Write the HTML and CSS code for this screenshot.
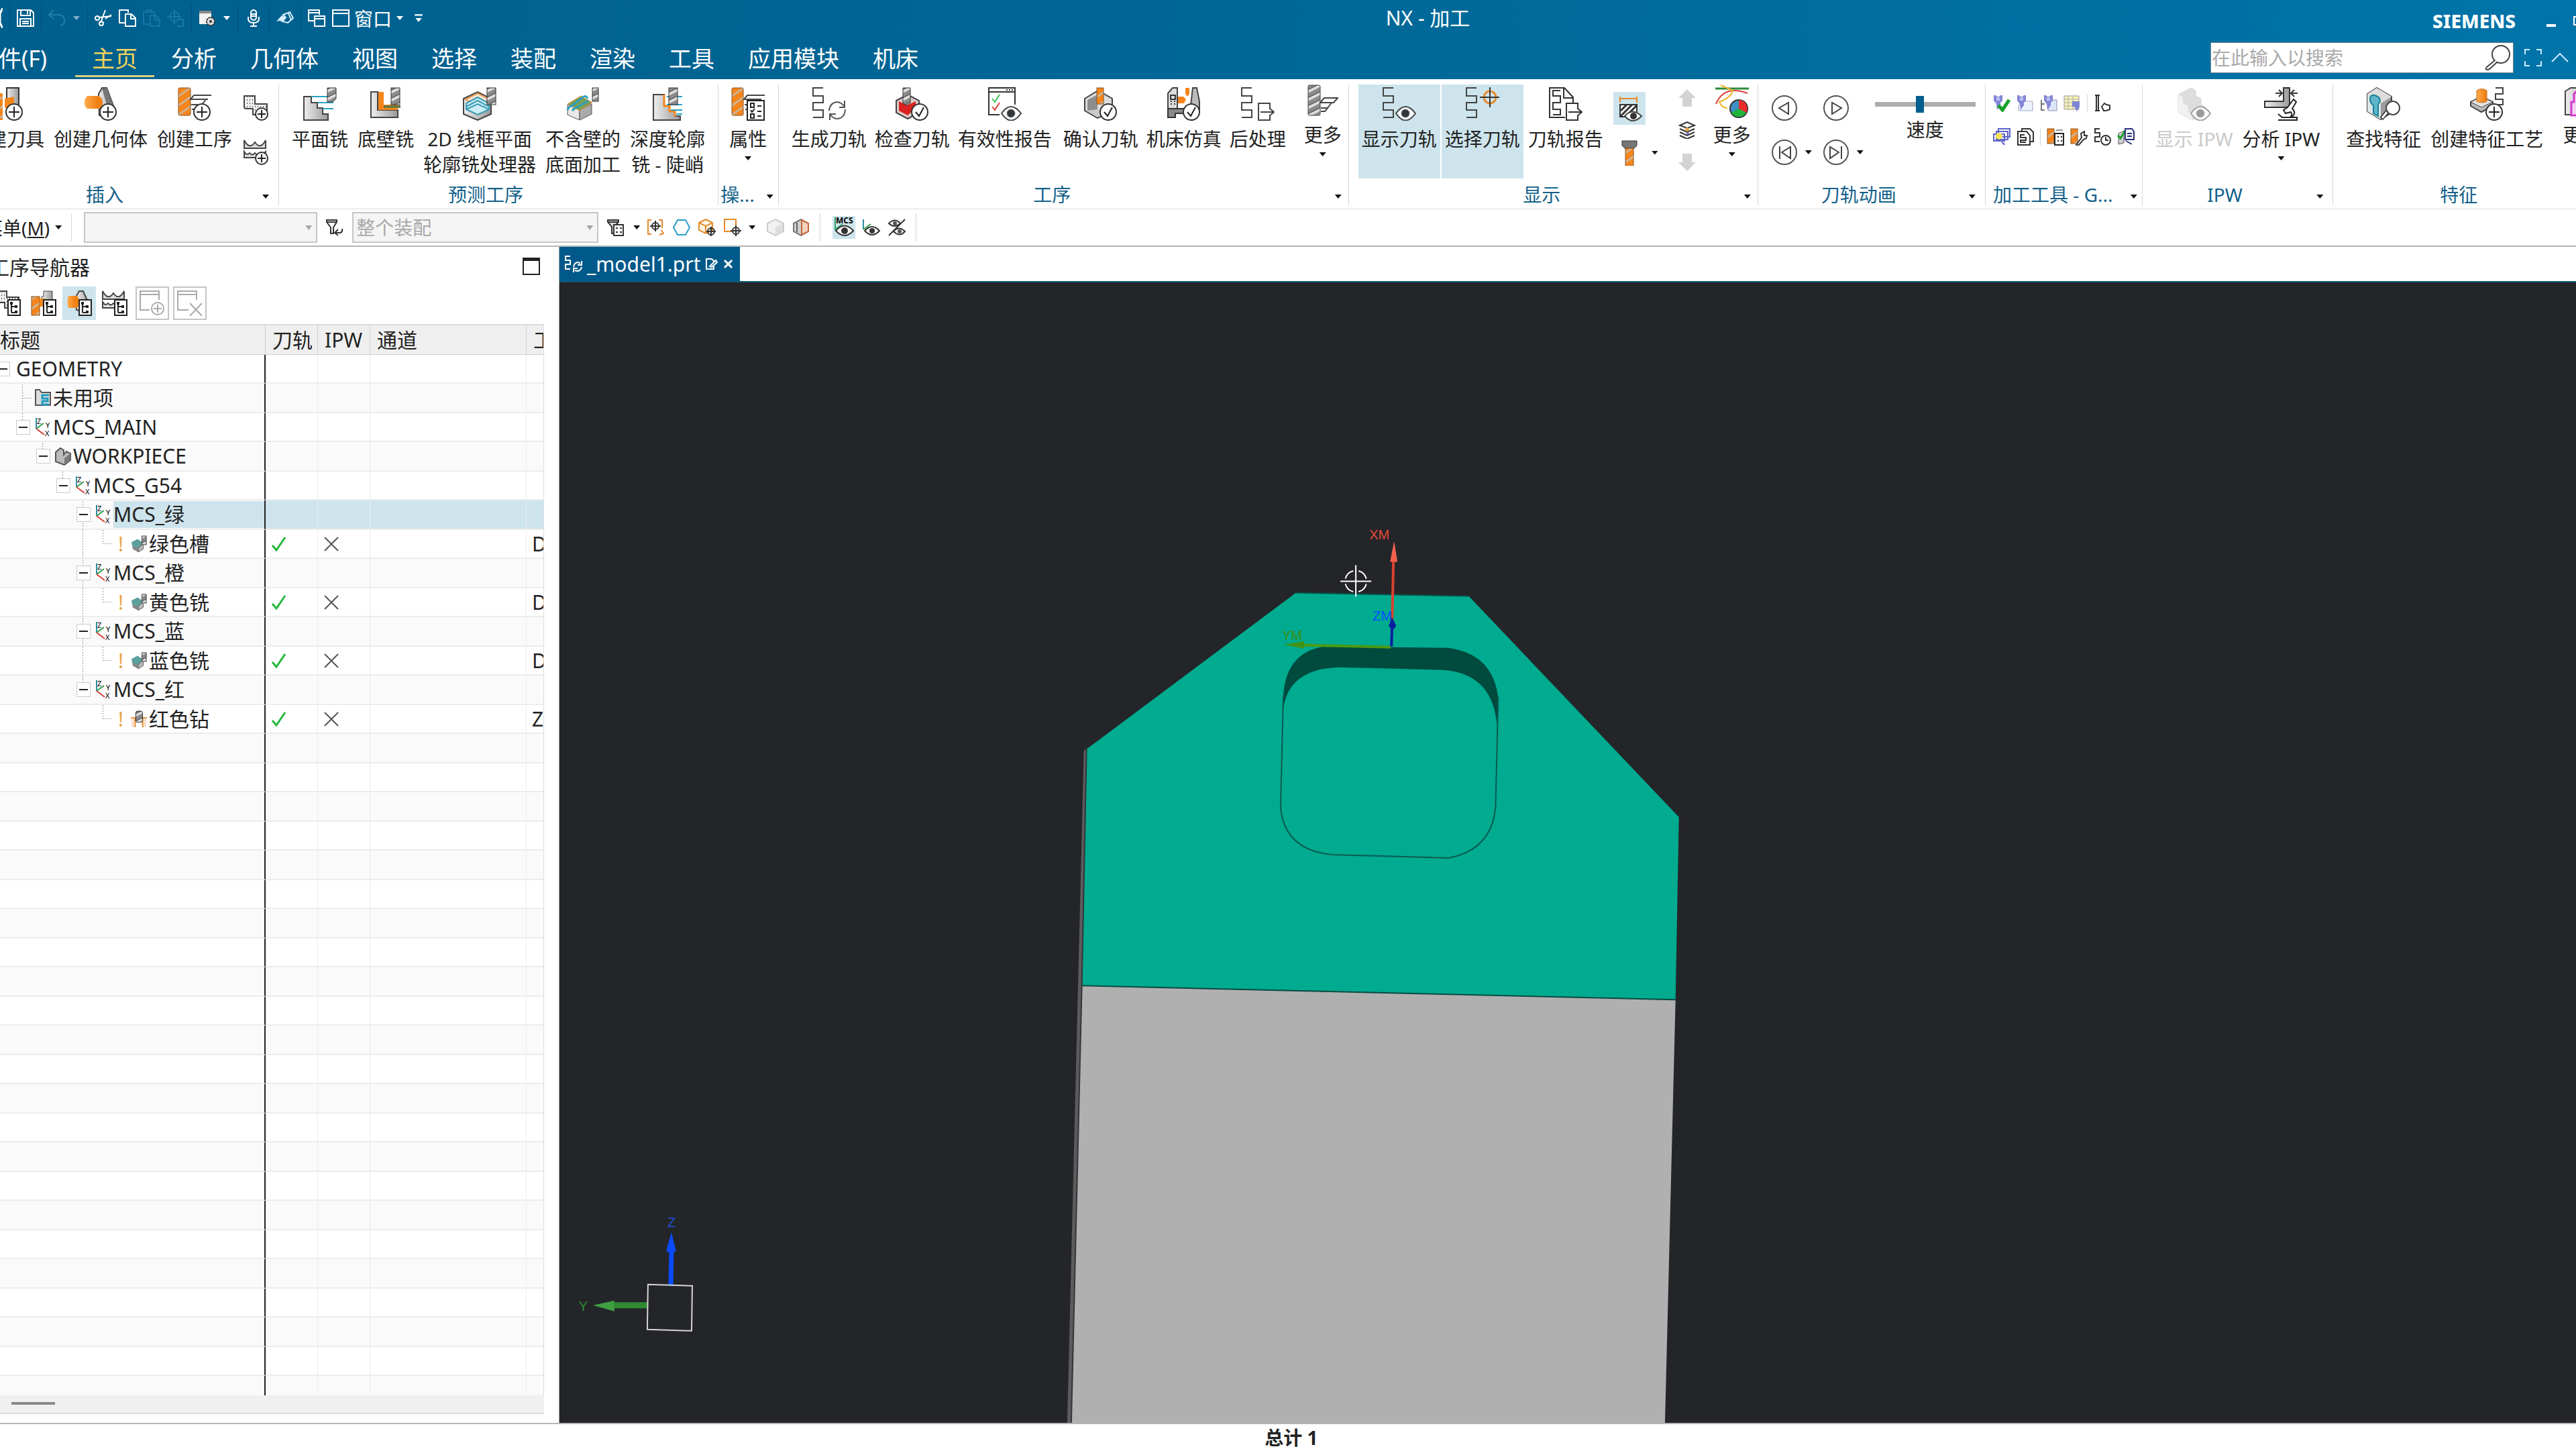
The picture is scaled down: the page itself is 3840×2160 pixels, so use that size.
FILE: index.html
```html
<!DOCTYPE html>
<html lang="zh-CN">
<head>
    <meta charset="UTF-8">
    <meta name="viewport" content="width=device-width, initial-scale=1.0">
    <title>NX - 加工</title>
    <link rel="stylesheet" href="styles.css">
</head>
<body>
    <!-- Shared icon parts -->
    <svg class="sprite" width="0" height="0" aria-hidden="true">
        <defs>
            <pattern id="grey-flute" width="24" height="12" patternUnits="userSpaceOnUse">
                <rect width="24" height="12" fill="#8c8c8c"/>
                <path d="M0 12L24 0M-12 6L12 -6M12 18L36 6" stroke="#dcdcdc" stroke-width="4"/>
                <path d="M0 9L24 -3M0 21L24 9" stroke="#444" stroke-width="1"/>
            </pattern>
            <pattern id="orange-flute" width="20" height="14" patternUnits="userSpaceOnUse">
                <rect width="20" height="14" fill="#f5861c"/>
                <path d="M0 14L20 0M-10 7L10 -7M10 21L30 7" stroke="#cdb495" stroke-width="3"/>
            </pattern>
            <pattern id="dots" width="4" height="5" patternUnits="userSpaceOnUse">
                <rect width="4" height="5" fill="#eee"/>
                <rect x="1" y="1" width="1" height="2" fill="#555"/>
            </pattern>
            <linearGradient id="steel">
                <stop offset="0" stop-color="#eee"/>
                <stop offset="1" stop-color="#9a9a9a"/>
            </linearGradient>
            <linearGradient id="orange">
                <stop offset="0" stop-color="#ffab4d"/>
                <stop offset="1" stop-color="#ee7a0c"/>
            </linearGradient>
        </defs>
        <symbol id="plus" viewBox="0 0 50 50"><circle cx="36" cy="37" r="12" fill="#fff" stroke="#333" stroke-width="2"/><path d="M36 29v16M28 37h16" stroke="#222" stroke-width="2"/></symbol>
        <symbol id="check" viewBox="0 0 50 50"><circle cx="36" cy="37" r="12" fill="#fff" stroke="#333" stroke-width="2"/><path d="M30 37l5 6 7-13" fill="none" stroke="#222" stroke-width="2"/></symbol>
        <symbol id="eye" viewBox="0 0 50 50"><path d="M20 39Q34 19 49 39Q34 60 20 39Z" fill="#fff" fill-opacity=".8" stroke="#444" stroke-width="2"/><circle cx="34" cy="39" r="6" fill="#33373a" stroke="#777"/></symbol>
        <symbol id="path" viewBox="0 0 50 50"><path d="M16 1H1V13H16V23H1V34H16V45H1" fill="none" stroke="#444" stroke-width="2"/></symbol>
        <symbol id="list" viewBox="0 0 50 50"><rect x="24" y="20" width="25" height="29" fill="#fff" stroke="#222" stroke-width="2"/><path d="M29 24h5v6h-5zM29 40h5v6h-5zM29 34l2 3 4-5M39 28h6M39 36h6M39 43h6" fill="none" stroke="#222" stroke-width="2"/></symbol>
        <symbol id="layers" viewBox="0 0 50 50"><path d="M24 12h26M24 12l-5 6h26M20 26h18l-5 7H21M42 18l-6 8" fill="none" stroke="#444" stroke-width="2"/></symbol>
        <symbol id="mcs" viewBox="0 0 24 28"><path d="M2 0V16" stroke="#2b8fa8" stroke-width="2"/><path d="M2 16L13 8" stroke="#2f9e44" stroke-width="2"/><path d="M2 16L14 25" stroke="#d9413b" stroke-width="2"/><text x="3" y="9" font-size="11">Z</text><text x="16" y="15" font-size="11">Y</text><text x="15" y="27" font-size="11">X</text></symbol>
        <symbol id="mill-op" viewBox="0 0 26 28"><path d="M1 11L11 6L20 12L12 24L3 20Z" fill="#5c9f9b"/><path d="M3 17L12 21V27L3 22Z" fill="#888"/><path d="M12 21L20 12V22L12 27Z" fill="#b9b9b9" stroke="#555"/><rect x="18" y="1" width="7" height="14" fill="url(#grey-flute)" stroke="#333"/></symbol>
        <symbol id="tree-badge" viewBox="0 0 38 38"><rect x="19" y="14" width="18" height="23" fill="#fff" stroke="#222" stroke-width="2"/><path d="M24 18v15M24 24h7M24 33h7" fill="none" stroke="#222" stroke-width="2"/><path d="M22 17h4v4h-4zM29 22h4v4h-4zM29 30h4v4h-4z" fill="#222"/></symbol>
        <symbol id="g-mark" viewBox="0 0 26 26"><path d="M1 1h3l2 2h3l2-2h3v8l-3 3v4l-5 7-1-9-4-5z" fill="#8585d6"/><path d="M5 4h5v5H5z" fill="#b9c4f3"/></symbol>
        <symbol id="done" viewBox="0 0 24 24"><path d="M2 14l6 7L21 2" fill="none" stroke="#25b83c" stroke-width="3"/></symbol>
        <symbol id="none" viewBox="0 0 24 24"><path d="M2 2l20 20M22 2L2 22" fill="none" stroke="#555" stroke-width="2"/></symbol>
    </svg>

    <header class="app-header">
        <div class="title-bar">
            <div class="quick-access">
                <svg class="logo-cut" viewBox="0 0 4 30"><path d="M4 0L0 8V22L4 30" fill="none" stroke="#fff" stroke-width="3"/></svg>
                <i class="divider"></i>
                <button class="quick" aria-label="保存"><svg viewBox="0 0 26 26"><path d="M1 1h20l4 4v20H1zM6 1v8h14V1M16 2v5M5 25V14h16v11M8 18h10M8 21h10" fill="none" stroke="#fff" stroke-width="2"/></svg></button>
                <i class="divider"></i>
                <button class="quick dim" aria-label="撤消"><svg viewBox="0 0 26 26"><path d="M8 1L1 8l7 6M1 8h14q9 0 9 9 0 6-6 7" fill="none" stroke="#4b9cc4" stroke-width="2"/></svg></button>
                <button class="quick narrow dim" aria-label="撤消列表"><i class="caret light"></i></button>
                <i class="divider"></i>
                <button class="quick" aria-label="剪切"><svg viewBox="0 0 26 26"><path d="M16 1L10 17M25 10L6 12M25 8l-9 6M9 20L12 12" fill="none" stroke="#fff" stroke-width="2"/><circle cx="4" cy="13" r="3" fill="none" stroke="#fff" stroke-width="2"/><circle cx="10" cy="21" r="3" fill="none" stroke="#fff" stroke-width="2"/></svg></button>
                <button class="quick" aria-label="复制"><svg viewBox="0 0 26 26"><path d="M9 20H1V1h13v4M10 7h9l6 6v12H10zM18 7v7h7" fill="none" stroke="#fff" stroke-width="2"/></svg></button>
                <button class="quick dim" aria-label="粘贴"><svg viewBox="0 0 26 26"><path d="M10 22H1V4h16v4M5 4V1h8v3M11 9h8l6 6v10H11zM18 9v7h7" fill="none" stroke="#2f8dbb" stroke-width="2"/></svg></button>
                <button class="quick dim" aria-label="定位"><svg viewBox="0 0 26 26"><path d="M11 0v22M0 11h22M15 15h9v10h-9" fill="none" stroke="#2f8dbb" stroke-width="2"/><circle cx="11" cy="11" r="7" fill="none" stroke="#2f8dbb" stroke-width="2"/></svg></button>
                <i class="divider"></i>
                <button class="quick" aria-label="界面设置"><svg viewBox="0 0 26 26"><path d="M1 2h18v20H1z" fill="#f2f2f2"/><path d="M1 2h18v4H1z" fill="#888"/><circle cx="18" cy="18" r="6" fill="#ddd" stroke="#333" stroke-width="2" stroke-dasharray="3 1"/><circle cx="18" cy="18" r="2" fill="#333"/></svg></button>
                <button class="quick narrow" aria-label="界面列表"><i class="caret light"></i></button>
                <i class="divider"></i>
                <button class="quick" aria-label="语音"><svg viewBox="0 0 26 26"><rect x="9" y="1" width="8" height="15" rx="4" fill="none" stroke="#fff" stroke-width="2"/><path d="M5 11v3q0 6 8 6t8-6v-3M13 20v5M8 25h10M10 7h6M10 10h6" fill="none" stroke="#fff" stroke-width="2"/></svg></button>
                <i class="divider"></i>
                <button class="quick" aria-label="触控"><svg viewBox="0 0 26 26"><path d="M0 18l8-9 6 3-4 6-6-1z" fill="#d7eefc"/><path d="M10 8l10-4 5 9-8 7-8-2 5-6zM18 6l4 10" fill="none" stroke="#d7eefc" stroke-width="2"/></svg></button>
                <i class="divider"></i>
                <button class="quick" aria-label="层叠窗口"><svg viewBox="0 0 26 26"><path d="M9 17H1V1h16v7M1 5h16M10 10h15v15H10zM10 14h15" fill="none" stroke="#fff" stroke-width="2"/></svg></button>
                <button class="quick window-menu"><svg viewBox="0 0 26 26"><path d="M1 1h24v24H1zM1 6h24" fill="none" stroke="#fff" stroke-width="2"/></svg>窗口<i class="caret light"></i></button>
                <button class="quick narrow" aria-label="自定义"><svg class="more-mark" viewBox="0 0 12 12"><path d="M1 2h10" stroke="#fff" stroke-width="2"/><path d="M2 6h8l-4 5z" fill="#fff"/></svg></button>
            </div>
            <h1 class="app-title">NX - 加工</h1>
            <div class="window-side">
                <strong class="brand">SIEMENS</strong>
                <button class="quick" aria-label="最小化"><i class="minimize"></i></button>
                <button class="quick maximize" aria-label="还原"></button>
            </div>
        </div>
        <div class="tab-row">
            <nav class="tabs">
                <a href="#file" class="file">文件(F)</a>
                <a href="#home" class="active">主页</a>
                <a href="#analysis">分析</a>
                <a href="#geometry">几何体</a>
                <a href="#view">视图</a>
                <a href="#select">选择</a>
                <a href="#assembly">装配</a>
                <a href="#render">渲染</a>
                <a href="#tools">工具</a>
                <a href="#modules">应用模块</a>
                <a href="#machine">机床</a>
            </nav>
            <div class="search">
                <input type="search" placeholder="在此输入以搜索" aria-label="搜索">
                <svg viewBox="0 0 38 38"><circle cx="24" cy="14" r="13" fill="#fff" stroke="#444" stroke-width="2"/><path d="M15 23L3 33q-3 4 1 4l3-1L19 25" fill="#fff" stroke="#444" stroke-width="2"/></svg>
            </div>
            <button class="quick" aria-label="全屏"><svg viewBox="0 0 26 26"><path d="M1 8V1h7M18 1h7v7M25 18v7h-7M8 25H1v-7" fill="none" stroke="#c9ecff" stroke-width="2"/></svg></button>
            <button class="quick last" aria-label="折叠功能区"><svg viewBox="0 0 26 26"><path d="M1 19L13 7L25 19" fill="none" stroke="#c9ecff" stroke-width="2"/></svg></button>
        </div>
    </header>

    <section class="ribbon">
        <div class="group">
            <div class="group-body">
                <button class="tool"><svg viewBox="0 0 50 50"><rect x="4" y="9" width="15" height="40" fill="url(#orange-flute)"/><path d="M25 1h18v26H25z" fill="url(#steel)" stroke="#333" stroke-width="2"/><path d="M22 17l14-3v14l-14 3z" fill="#f5861c"/><use href="#plus"/></svg><span>创建刀具</span></button>
                <button class="tool"><svg viewBox="0 0 50 50"><path d="M22 10L27 1h7L45 30 30 44 23 42z" fill="url(#steel)" stroke="#444" stroke-width="2"/><path d="M34 1L45 30l-8 5L27 2z" fill="#777"/><path d="M5 13h18v19H5q-4-3-4-9t4-10" fill="url(#orange)"/><ellipse cx="23" cy="23" rx="5" ry="9" fill="#f08214"/><use href="#plus"/></svg><span>创建几何体</span></button>
                <button class="tool"><svg viewBox="0 0 50 50"><rect x="1" y="1" width="18" height="41" rx="2" fill="url(#orange-flute)" stroke="#8a5320"/><use href="#layers"/><use href="#plus"/></svg><span>创建工序</span></button>
                <div class="stack">
                    <button class="mini" aria-label="创建程序"><svg viewBox="0 0 38 38"><path d="M1 1h16v12h18v16H14V20H4q-3 0-3-3z" fill="url(#dots)" stroke="#444" stroke-width="2"/><circle cx="27" cy="28" r="9" fill="#fff" stroke="#333" stroke-width="2"/><path d="M27 22v12M21 28h12" stroke="#222" stroke-width="2"/></svg></button>
                    <button class="mini" aria-label="创建方法"><svg viewBox="0 0 38 38"><path d="M1 1q8 15 16 3q8 12 16-3v12H1zM1 18q4 7 8 2 4 5 8 0 4 5 8 0 4 3 8-2v9H1z" fill="#ddd" stroke="#444" stroke-width="2"/><circle cx="27" cy="28" r="9" fill="#fff" stroke="#333" stroke-width="2"/><path d="M27 22v12M21 28h12" stroke="#222" stroke-width="2"/></svg></button>
                </div>
            </div>
            <div class="group-name"><span>插入</span><i class="caret"></i></div>
        </div>

        <div class="group">
            <div class="group-body">
                <button class="tool"><svg viewBox="0 0 50 50"><path d="M1 14h11v9h9v8h8v9h8v9H1z" fill="url(#steel)" stroke="#444" stroke-width="2"/><path d="M12 14h24M22 23h23M29 32h16" stroke="#29a3c4" stroke-width="2"/><path d="M36 1h13v16l-5 5h-8z" fill="url(#grey-flute)" stroke="#333"/></svg><span>平面铣</span></button>
                <button class="tool"><svg viewBox="0 0 50 50"><path d="M3 7h10v27h30v11H3z" fill="url(#steel)" stroke="#444" stroke-width="2"/><path d="M14 7h8v19h21v8H14z" fill="#f5861c"/><path d="M22 29h25" stroke="#6b7a3d" stroke-width="4"/><rect x="33" y="1" width="13" height="25" fill="url(#grey-flute)" stroke="#333"/></svg><span>底壁铣</span></button>
                <button class="tool"><svg viewBox="0 0 50 50"><path d="M1 17L22 7l20 10v23L22 49 1 40z" fill="url(#steel)" stroke="#444" stroke-width="2"/><path d="M4 18l18-9 18 9-18 10z" fill="#f6e6d4" stroke="#e8954a" stroke-width="2"/><path d="M5 24l17-9 17 9v9l-17 8-17-8zM5 29l17-9 17 9M5 33l17-8 17 8" fill="#cdeef5" stroke="#3b9cb5" stroke-width="2"/><rect x="36" y="1" width="13" height="25" fill="url(#grey-flute)" stroke="#333"/></svg><span>2D 线框平面<br>轮廓铣处理器</span></button>
                <button class="tool"><svg viewBox="0 0 50 50"><path d="M2 26l18 8v15L2 41z" fill="#e8e8e8" stroke="#555"/><path d="M20 34l18-9v15l-18 9z" fill="#aaa" stroke="#555"/><path d="M2 25L22 13l17 10-19 12z" fill="#7f9c52" stroke="#e8954a"/><path d="M2 34q2-6 6-6L26 14q4-2 6 3M9 35q3-4 7-5L33 20" fill="none" stroke="#2ba0bd" stroke-width="3"/><rect x="39" y="1" width="9" height="20" fill="url(#grey-flute)" stroke="#333"/></svg><span>不含壁的<br>底面加工</span></button>
                <button class="tool"><svg viewBox="0 0 50 50"><path d="M4 11h16v17h8v8h8v7h8v6H4z" fill="url(#steel)" stroke="#444" stroke-width="2"/><path d="M20 11v17h8v8h8v8" fill="none" stroke="#f5861c" stroke-width="3"/><path d="M24 14h23M24 26h23M30 34h17M38 40h9" stroke="#29a3c4" stroke-width="2"/><rect x="27" y="1" width="13" height="25" fill="url(#grey-flute)" stroke="#333"/></svg><span>深度轮廓<br>铣 - 陡峭</span></button>
            </div>
            <div class="group-name"><span>预测工序</span></div>
        </div>

        <div class="group compact">
            <div class="group-body">
                <button class="tool"><svg viewBox="0 0 50 50"><rect x="1" y="1" width="17" height="41" rx="2" fill="url(#orange-flute)" stroke="#8a5320"/><use href="#layers"/><use href="#list"/></svg><span>属性</span><i class="caret"></i></button>
            </div>
            <div class="group-name"><span>操...</span><i class="caret"></i></div>
        </div>

        <div class="group tight">
            <div class="group-body">
                <button class="tool"><svg viewBox="0 0 50 50"><use href="#path"/><path d="M25 35q1-12 12-13 7 1 11 7M48 20v10h-8M49 33q-1 14-13 14-6-1-9-6M26 49V40h9" fill="none" stroke="#555" stroke-width="2"/></svg><span>生成刀轨</span></button>
                <button class="tool"><svg viewBox="0 0 50 50"><path d="M1 20L18 11l17 9v18l-17 9L1 38z" fill="#ddc9c9" stroke="#444" stroke-width="2"/><path d="M5 21l12 6 13-6v10L18 42 5 35z" fill="#d9231f"/><path d="M11 1h11v22l-5 4-6-3z" fill="url(#grey-flute)" stroke="#333"/><use href="#check"/></svg><span>检查刀轨</span></button>
                <button class="tool wide"><svg viewBox="0 0 50 50"><path d="M40 26V1H1v40h16M1 7h39" fill="none" stroke="#333" stroke-width="2"/><path d="M27 4h2M31 4h2M35 4h2" stroke="#333" stroke-width="2"/><path d="M6 17l4 5 7-11" fill="none" stroke="#3fbf55" stroke-width="2"/><path d="M6 29l4 5 7-11" fill="none" stroke="#e0403c" stroke-width="2"/><use href="#eye"/></svg><span>有效性报告</span></button>
                <button class="tool"><svg viewBox="0 0 50 50"><path d="M1 17L21 5l21 12v20L20 46 1 35z" fill="#ddd" stroke="#444" stroke-width="2"/><path d="M5 19l15-8v22L5 35z" fill="#8d8d8d"/><path d="M20 33l17 3-17 8L5 36z" fill="#c9c9c9"/><rect x="19" y="1" width="10" height="24" fill="url(#orange-flute)" stroke="#8a5320"/><use href="#check"/></svg><span>确认刀轨</span></button>
                <button class="tool"><svg viewBox="0 0 50 50"><path d="M1 9L8 1h7v31H1z" fill="#ddd" stroke="#444" stroke-width="2"/><path d="M38 1h6l4 20v15H34z" fill="#bbb" stroke="#444" stroke-width="2"/><path d="M1 32h36v7H12v6H1z" fill="#8a8a8a" stroke="#333" stroke-width="2"/><path d="M5 12h7v6H5zM5 21h2M10 21h2M5 25h2M10 25h2" stroke="#333" stroke-width="2" fill="none"/><path d="M27 1h6v9l-3 4-3-4zM16 14h8l4 4-3 6h-9z" fill="#f5861c"/><use href="#check"/></svg><span>机床仿真</span></button>
                <button class="tool"><svg viewBox="0 0 50 50"><use href="#path"/><path d="M43 31V24H26v25h17v-7M29 37h19M42 31l7 6-7 6" fill="none" stroke="#444" stroke-width="2"/></svg><span>后处理</span></button>
                <button class="tool more"><svg viewBox="0 0 50 50"><rect x="3" y="1" width="18" height="45" rx="2" fill="url(#grey-flute)" stroke="#444"/><path d="M27 20h21M27 20l-6 7h20l6-7M22 35h10l-4 5h-6M38 27l-6 8" fill="none" stroke="#444" stroke-width="2"/></svg><span>更多</span><i class="caret"></i></button>
            </div>
            <div class="group-name"><span>工序</span><i class="caret"></i></div>
        </div>

        <div class="group tight">
            <div class="group-body">
                <button class="tool on"><svg viewBox="0 0 50 50"><use href="#path"/><use href="#eye"/></svg><span>显示刀轨</span></button>
                <button class="tool on"><svg viewBox="0 0 50 50"><use href="#path"/><ellipse cx="36" cy="15" rx="9" ry="9" fill="none" stroke="#e58a2b" stroke-width="3"/><path d="M36 0v30M21 15h29" stroke="#333" stroke-width="2"/></svg><span>选择刀轨</span></button>
                <button class="tool"><svg viewBox="0 0 50 50"><path d="M24 45H1V1h22l13 14v8M22 1v15h14" fill="none" stroke="#333" stroke-width="2"/><path d="M17 5H6v8h11v10H6v10h11v8H6" fill="none" stroke="#333" stroke-width="2"/><path d="M43 31V24H26v25h17v-7M29 37h19M42 31l7 6-7 6" fill="#fff" stroke="#333" stroke-width="2"/></svg><span>刀轨报告</span></button>
                <div class="stack icons">
                    <span><button class="mini on" aria-label="测量显示"><svg viewBox="0 0 38 38"><path d="M5 13h25v18H5z" fill="#fff" stroke="#333" stroke-width="2"/><path d="M6 22l9-9M6 30L23 13M14 30L30 14" stroke="#333" stroke-width="3"/><path d="M5 1v9M30 1v9M5 4h24" stroke="#e58a2b" stroke-width="2"/><path d="M12 30q11-13 25 0-13 14-25 0z" fill="#fff" stroke="#444" stroke-width="2"/><circle cx="25" cy="30" r="5" fill="#333"/></svg></button></span>
                    <span><button class="mini" aria-label="刀具显示"><svg viewBox="0 0 38 38"><path d="M8 1h22v7l-4 4H12L8 8z" fill="#777" stroke="#333"/><rect x="13" y="12" width="12" height="26" fill="url(#orange-flute)" stroke="#8a5320"/></svg></button><i class="caret"></i></span>
                </div>
                <div class="stack levels">
                    <svg viewBox="0 0 26 26"><path d="M13 0L26 13H20V26H6V13H0z" fill="#d3d3d3"/></svg>
                    <svg viewBox="0 0 26 26"><path d="M2 6L13 1l11 5-11 4zM2 11l11 5 11-5M2 16l11 5 11-5M2 21l11 5 11-5" fill="none" stroke="#333" stroke-width="2"/><circle cx="13" cy="12" r="3" fill="#e5a64b"/><circle cx="14" cy="18" r="2" fill="#6a78d0"/></svg>
                    <svg viewBox="0 0 26 26"><path d="M13 26L26 13H20V0H6V13H0z" fill="#d3d3d3"/></svg>
                </div>
                <button class="tool more"><svg viewBox="0 0 50 50"><path d="M0 6h50" stroke="#2e8b3a" stroke-width="3"/><path d="M1 29Q13 0 48 13" fill="none" stroke="#e0403c" stroke-width="2"/><path d="M8 1q14 6 18 8-2 10-20 17 4 9 12 9" fill="none" stroke="#f0b429" stroke-width="2"/><circle cx="35" cy="36" r="13" fill="#3d8fc0" stroke="#333" stroke-width="2"/><path d="M35 36V23a13 13 0 0 1 11 19z" fill="#f02a2a"/><path d="M35 36l11 6a13 13 0 0 1-22 0z" fill="#1fb53a"/></svg><span>更多</span><i class="caret"></i></button>
            </div>
            <div class="group-name"><span>显示</span><i class="caret"></i></div>
        </div>

        <div class="group">
            <div class="group-body">
                <div class="player">
                    <button class="mini" aria-label="后退"><svg viewBox="0 0 38 38"><circle cx="19" cy="19" r="18" fill="#fff" stroke="#555" stroke-width="2"/><path d="M25 11v17L11 19z" fill="none" stroke="#444" stroke-width="2"/></svg></button>
                    <i></i>
                    <button class="mini" aria-label="播放"><svg viewBox="0 0 38 38"><circle cx="19" cy="19" r="18" fill="#fff" stroke="#555" stroke-width="2"/><path d="M13 11v17l14-9z" fill="none" stroke="#444" stroke-width="2"/></svg></button>
                    <i></i>
                    <button class="mini" aria-label="上一个"><svg viewBox="0 0 38 38"><circle cx="19" cy="19" r="18" fill="#fff" stroke="#555" stroke-width="2"/><path d="M28 11v17L15 19zM12 10v19" fill="none" stroke="#444" stroke-width="2"/></svg></button>
                    <i class="caret"></i>
                    <button class="mini" aria-label="下一个"><svg viewBox="0 0 38 38"><circle cx="19" cy="19" r="18" fill="#fff" stroke="#555" stroke-width="2"/><path d="M10 11v17l13-9zM27 10v19" fill="none" stroke="#444" stroke-width="2"/></svg></button>
                    <i class="caret"></i>
                </div>
                <div class="speed">
                    <input type="range" id="speed" min="0" max="100" value="44">
                    <label for="speed">速度</label>
                </div>
            </div>
            <div class="group-name"><span>刀轨动画</span><i class="caret"></i></div>
        </div>

        <div class="group compact">
            <div class="group-body">
                <div class="mini-rows">
                    <div>
                        <button class="tiny" aria-label="检查"><svg viewBox="0 0 26 26"><use href="#g-mark"/><path d="M8 16l6 7L24 8" fill="none" stroke="#18a02c" stroke-width="5"/></svg></button>
                        <button class="tiny" aria-label="新建"><svg viewBox="0 0 26 26"><path d="M9 10h15v14H3V16z" fill="#eef2fc" stroke="#9aa6c4"/><use href="#g-mark"/></svg></button>
                        <button class="tiny" aria-label="结构"><svg viewBox="0 0 26 26"><path d="M2 8v15h5M2 14h5" fill="none" stroke="#777" stroke-width="2"/><path d="M12 8h13v16H12z" fill="#dce6fa" stroke="#8b93b5"/><g transform="translate(5 0)"><use href="#g-mark"/></g></svg></button>
                        <button class="tiny" aria-label="表格"><svg viewBox="0 0 26 26"><path d="M1 2h22v20H1z" fill="#f7f3b8" stroke="#999"/><path d="M1 7h22M1 12h22M1 17h22M7 2v20M14 2v20" stroke="#aaa"/><path d="M13 10h11v8l-4 7-4-7h-3z" fill="#7d83d4"/></svg></button>
                        <i class="divider"></i>
                        <button class="tiny" aria-label="拾取"><svg viewBox="0 0 26 26"><path d="M2 1h7M2 24h7M4 2v21M7 2v21M12 18l4-5 3 2 5 1v6l-5 2h-4z" fill="none" stroke="#333" stroke-width="2"/></svg></button>
                    </div>
                    <div>
                        <button class="tiny" aria-label="批处理"><svg viewBox="0 0 26 26"><path d="M8 1h17v12H8zM5 5h17v12H5zM1 9h16v10H1z" fill="#fff" stroke="#5a62c8" stroke-width="2"/><circle cx="9" cy="12" r="5" fill="#f5e35c"/><path d="M12 18l5 7" stroke="#7d83d4" stroke-width="3"/></svg></button>
                        <button class="tiny" aria-label="文档"><svg viewBox="0 0 26 26"><path d="M8 5V1h12l5 5v14h-4M2 5h13l5 6v14H2z" fill="#fff" stroke="#333" stroke-width="2"/><path d="M12 10H6v4h8v4H6v3h8" fill="none" stroke="#333" stroke-width="2"/></svg></button>
                        <i class="divider"></i>
                        <button class="tiny" aria-label="刀具属性"><svg viewBox="0 0 26 26"><rect x="1" y="1" width="10" height="22" fill="url(#orange-flute)" stroke="#8a5320"/><path d="M14 3h10" stroke="#333"/><rect x="12" y="8" width="13" height="17" fill="#fff" stroke="#222" stroke-width="2"/><path d="M16 13h2M16 19h2M21 13h2M21 19h2" stroke="#222" stroke-width="2"/></svg></button>
                        <button class="tiny" aria-label="刀具维护"><svg viewBox="0 0 26 26"><rect x="1" y="1" width="10" height="22" fill="url(#orange-flute)" stroke="#8a5320"/><path d="M9 25l8-11-1-6 5-3v6h4l-1 4-4 2-8 9z" fill="#fff" stroke="#333" stroke-width="2"/></svg></button>
                        <button class="tiny" aria-label="加工时间"><svg viewBox="0 0 26 26"><path d="M9 1H2v6h7v6H2v7h7" fill="none" stroke="#333" stroke-width="2"/><circle cx="18" cy="18" r="7" fill="#fff" stroke="#333" stroke-width="2"/><path d="M18 13v5h4" fill="none" stroke="#333" stroke-width="2"/></svg></button>
                        <button class="tiny" aria-label="输出"><svg viewBox="0 0 26 26"><path d="M2 8l8-4v18l-8 2z" fill="#cfcfcf" stroke="#555"/><path d="M1 11l4 4L12 4" fill="none" stroke="#18a02c" stroke-width="3"/><path d="M12 1h10l3 4v12H12z" fill="#fff" stroke="#28307c" stroke-width="2"/><path d="M15 8h7M15 12h7M13 19l9 5" stroke="#28307c" stroke-width="2"/></svg></button>
                    </div>
                </div>
            </div>
            <div class="group-name"><span>加工工具 - G...</span><i class="caret"></i></div>
        </div>

        <div class="group">
            <div class="group-body">
                <button class="tool" disabled><svg viewBox="0 0 50 50"><path d="M1 11L20 1l7 4v8l8 4v9l6 3v11l-19 9L1 38z" fill="#bdbdbd" stroke="#aaa"/><path d="M1 11l7 4v9l8 4v9l6 4v8L1 38z" fill="#e4e4e4"/><use href="#eye"/></svg><span>显示 IPW</span></button>
                <button class="tool"><svg viewBox="0 0 50 50"><path d="M29 1h9v29H1V21h28z" fill="url(#steel)" stroke="#333" stroke-width="2"/><path d="M17 9h10M22 4l5 5-5 5M50 9H40M45 4l-5 5 5 5" fill="none" stroke="#333" stroke-width="2"/><path d="M21 49h28v-4H41q8-7 1-13l6-10-4-4-9 12-6 4 3 5 8-2q3 4-1 8H27l-6-5" fill="#fff" stroke="#222" stroke-width="2"/></svg><span>分析 IPW</span><i class="caret"></i></button>
            </div>
            <div class="group-name"><span>IPW</span><i class="caret"></i></div>
        </div>

        <div class="group">
            <div class="group-body">
                <button class="tool"><svg viewBox="0 0 50 50"><path d="M1 10L15 1l22 13v24l-16 10L1 36z" fill="#9b9b9b" stroke="#444" stroke-width="2"/><path d="M1 10L15 1l22 13-16 10z" fill="#ddd"/><path d="M1 10l20 13v25L1 36z" fill="#d8e6ea"/><path d="M5 17q0-6 7-5 8 2 8 9l-3 5v17l-7-4V27q-5-3-5-10z" fill="#5fb6cb" stroke="#1f7f99" stroke-width="2"/><path d="M31 36L22 47" stroke="#333" stroke-width="6"/><path d="M31 36L23 46" stroke="#fff" stroke-width="3"/><circle cx="39" cy="31" r="10" fill="#fff" stroke="#444" stroke-width="2"/></svg><span>查找特征</span></button>
                <button class="tool"><svg viewBox="0 0 50 50"><path d="M1 22l16-8 17 8v6l-17 9L1 28z" fill="#b9b9b9" stroke="#444" stroke-width="2"/><path d="M1 22l16-8 17 8-17 8z" fill="#e3e3e3" stroke="#444"/><path d="M10 5q7-5 15 0v16q-8 4-15 0z" fill="url(#orange)" stroke="#c86a10"/><path d="M38 1h11v9H38v8h11v8H40" fill="none" stroke="#444" stroke-width="2"/><use href="#plus"/></svg><span>创建特征工艺</span></button>
                <button class="tool more"><svg viewBox="0 0 50 50"><path d="M1 10L9 5h38v40H1z" fill="url(#steel)" stroke="#444" stroke-width="2"/><path d="M10 46V26h4V14q6-8 20-8v12H22v28z" fill="#f3d6f3" stroke="#d63bd0" stroke-width="3"/></svg><span>更多</span><i class="caret"></i></button>
            </div>
            <div class="group-name"><span>特征</span></div>
        </div>
    </section>

    <section class="selection-bar">
        <button class="menu-button"><span>菜单(<u>M</u>)</span><i class="caret"></i></button>
        <i class="divider"></i>
        <div class="combo"><select aria-label="类型过滤器" disabled><option></option></select></div>
        <button class="pick" aria-label="重置过滤器"><svg viewBox="0 0 26 26"><path d="M1 2h15v3l-5 8v9H7V13L1 5zM1 5h15M15 21h6q4-1 3-6M18 16l-5 5 5 4" fill="none" stroke="#333" stroke-width="2"/></svg></button>
        <div class="combo"><select aria-label="选择范围" disabled><option>整个装配</option></select></div>
        <button class="pick" aria-label="过滤器"><svg viewBox="0 0 26 26"><path d="M1 2h16v3l-5 5v12H7V12L1 5zM1 5h15" fill="#ddd" stroke="#333" stroke-width="2"/><path d="M10 9h14v16H10z" fill="#fff" stroke="#333" stroke-width="2"/><path d="M13 14h3M19 14h3M13 20h3M19 20h3" stroke="#333" stroke-width="2"/></svg></button>
        <i class="caret"></i>
        <button class="pick" aria-label="定向"><svg viewBox="0 0 26 26"><path d="M6 2H1v21h5M17 2h5v12M18 24l6-2-3-5" fill="none" stroke="#e58a2b" stroke-width="2"/><circle cx="12" cy="11" r="5" fill="none" stroke="#333" stroke-width="2"/><path d="M12 3v16M4 11h16" stroke="#333" stroke-width="2"/></svg></button>
        <button class="pick" aria-label="多边形"><svg viewBox="0 0 26 26"><path d="M7 2h12l6 11-6 11H7L1 13z" fill="none" stroke="#2a9dc9" stroke-width="2"/></svg></button>
        <button class="pick" aria-label="体"><svg viewBox="0 0 26 26"><path d="M1 6l10-5 10 5v11l-10 5-10-5zM1 6l10 5 10-5M11 11v11" fill="#fff3e2" stroke="#e58a2b" stroke-width="2"/><circle cx="19" cy="19" r="5" fill="none" stroke="#333" stroke-width="2"/><path d="M19 12v14M12 19h14" stroke="#333" stroke-width="2"/></svg></button>
        <button class="pick" aria-label="面"><svg viewBox="0 0 26 26"><path d="M18 12V1H1v18h11" fill="none" stroke="#e58a2b" stroke-width="2"/><circle cx="18" cy="18" r="5" fill="none" stroke="#333" stroke-width="2"/><path d="M18 10v16M10 18h16" stroke="#333" stroke-width="2"/></svg></button>
        <i class="caret"></i>
        <button class="pick gap" aria-label="着色" disabled><svg viewBox="0 0 26 26"><path d="M1 7l12-6 12 6v12l-12 6-12-6z" fill="#f1f1f1" stroke="#ccc" stroke-width="2"/><path d="M13 13l11-6v12l-11 6z" fill="#ddd"/></svg></button>
        <button class="pick" aria-label="截面"><svg viewBox="0 0 26 26"><path d="M2 7l11-6 11 6v12l-11 6-11-6z" fill="#d0d0d0" stroke="#777" stroke-width="2"/><path d="M14 2l10 5v12l-10 5z" fill="#f3d3be" stroke="#c5683c" stroke-width="2"/><path d="M7 6v14" stroke="#666" stroke-width="2"/></svg></button>
        <i class="divider"></i>
        <button class="pick on" aria-label="显示 MCS"><svg viewBox="0 0 34 34"><path d="M4 2v18l11-8" fill="none" stroke="#2f9e6a" stroke-width="2"/><text x="5" y="11" font-size="12">MCS</text><path d="M5 22q13-15 26 0-13 14-26 0z" fill="#fff" stroke="#333" stroke-width="2"/><circle cx="18" cy="22" r="5" fill="#333"/></svg></button>
        <button class="pick" aria-label="显示坐标系"><svg viewBox="0 0 26 26"><path d="M1 1v15" stroke="#2b8fa8" stroke-width="2"/><path d="M1 16l11-8" stroke="#2f9e44" stroke-width="2"/><path d="M3 18q11-12 22 0-11 12-22 0z" fill="#fff" stroke="#333" stroke-width="2"/><circle cx="14" cy="18" r="4" fill="#333"/></svg></button>
        <button class="pick" aria-label="显示和隐藏"><svg viewBox="0 0 26 26"><path d="M25 1L1 25M1 7q9-9 17 0-9 8-17 0zM8 19q8-9 17 0-8 9-17 0z" fill="none" stroke="#333" stroke-width="2"/><circle cx="10" cy="7" r="3" fill="#555"/><circle cx="17" cy="19" r="3" fill="#555"/></svg></button>
        <i class="divider"></i>
    </section>

    <main class="workspace">
        <aside class="navigator">
            <div class="navigator-title">
                <h2>工序导航器</h2>
                <button class="dock" aria-label="最大化"></button>
            </div>
            <div class="navigator-tools">
                <button class="nav-view" aria-label="程序顺序视图"><svg viewBox="0 0 38 38"><path d="M1 1h16v9h18v16H14V18H4q-3 0-3-3z" fill="url(#dots)" stroke="#444" stroke-width="2"/><use href="#tree-badge"/></svg></button>
                <button class="nav-view" aria-label="机床视图"><svg viewBox="0 0 38 38"><rect x="1" y="9" width="12" height="28" fill="url(#orange-flute)" stroke="#8a5320"/><path d="M19 1h13v16H16V9h3z" fill="url(#steel)" stroke="#444"/><path d="M13 12h8v12h-8z" fill="#f5861c"/><use href="#tree-badge"/></svg></button>
                <button class="nav-view on" aria-label="几何视图"><svg viewBox="0 0 38 38"><path d="M15 8l4-7h6l9 20-10 10-9-2z" fill="url(#steel)" stroke="#444" stroke-width="2"/><path d="M3 8h12v18H3q-3-9 0-18" fill="url(#orange)"/><ellipse cx="15" cy="17" rx="4" ry="9" fill="#f08214"/><use href="#tree-badge"/></svg></button>
                <button class="nav-view" aria-label="加工方法视图"><svg viewBox="0 0 38 38"><path d="M1 1q8 15 16 3q8 12 16-3v12H1zM1 17q4 7 8 2 4 5 8 0 4 5 8 0 4 3 8-2v9H1z" fill="#ddd" stroke="#444" stroke-width="2"/><use href="#tree-badge"/></svg></button>
                <button class="nav-view boxed" aria-label="新建视图" disabled><svg viewBox="0 0 38 38"><path d="M29 14V1H1v28h14M1 6h28" fill="none" stroke="#aaa" stroke-width="2"/><circle cx="27" cy="27" r="9" fill="#fff" stroke="#aaa" stroke-width="2"/><path d="M27 21v12M21 27h12" stroke="#aaa" stroke-width="2"/></svg></button>
                <button class="nav-view boxed" aria-label="删除视图" disabled><svg viewBox="0 0 38 38"><path d="M29 14V1H1v28h16M1 6h28M19 19l18 19M37 19L19 38" fill="none" stroke="#aaa" stroke-width="2"/></svg></button>
            </div>
            <div class="tree-area">
                <table class="tree">
                    <colgroup>
                        <col class="col-name"><col class="col-path"><col class="col-ipw"><col class="col-channel"><col>
                    </colgroup>
                    <thead>
                        <tr><th>标题</th><th>刀轨</th><th>IPW</th><th>通道</th><th>工</th></tr>
                    </thead>
                    <tbody id="tree-rows">
                        <tr><td><div class="node"><i class="fold"></i><span class="label root">GEOMETRY</span></div></td><td></td><td></td><td></td><td></td></tr>
                        <tr><td><div class="node"><i class="rail blank"></i><i class="elbow full"></i><svg viewBox="0 0 24 28"><path d="M1 25V2h6l3 4h13v19z" fill="#ddd" stroke="#555" stroke-width="2"/><path d="M21 10H11v5h8v4h-8v5h10" fill="none" stroke="#1f9cc0" stroke-width="3"/></svg><span class="label">未用项</span></div></td><td></td><td></td><td></td><td></td></tr>
                        <tr><td><div class="node"><i class="rail blank"></i><i class="fold last"></i><svg viewBox="0 0 24 28"><use href="#mcs"/></svg><span class="label">MCS_MAIN</span></div></td><td></td><td></td><td></td><td></td></tr>
                        <tr><td><div class="node"><i class="rail blank"></i><i class="rail blank"></i><i class="fold last"></i><svg viewBox="0 0 24 28"><path d="M1 8l7-6 5 3v7l4-5 6 3v10l-9 7-13-5z" fill="#bbb" stroke="#555" stroke-width="2"/><path d="M14 17l9-7v10l-9 7z" fill="#777"/></svg><span class="label">WORKPIECE</span></div></td><td></td><td></td><td></td><td></td></tr>
                        <tr><td><div class="node"><i class="rail blank"></i><i class="rail blank"></i><i class="rail blank"></i><i class="fold last"></i><svg viewBox="0 0 24 28"><use href="#mcs"/></svg><span class="label">MCS_G54</span></div></td><td></td><td></td><td></td><td></td></tr>
                        <tr class="selected"><td><div class="node"><i class="rail blank"></i><i class="rail blank"></i><i class="rail blank"></i><i class="rail blank"></i><i class="fold mid"></i><svg viewBox="0 0 24 28"><use href="#mcs"/></svg><span class="label">MCS_绿</span></div></td><td></td><td></td><td></td><td></td></tr>
                        <tr><td><div class="node"><i class="rail blank"></i><i class="rail blank"></i><i class="rail blank"></i><i class="rail blank"></i><i class="rail"></i><i class="elbow"></i><i class="warn">!</i><svg viewBox="0 0 26 28"><use href="#mill-op"/></svg><span class="label">绿色槽</span></div></td><td><svg class="mark" role="img" aria-label="已生成"><use href="#done"/></svg></td><td><svg class="mark" role="img" aria-label="无"><use href="#none"/></svg></td><td></td><td>D</td></tr>
                        <tr><td><div class="node"><i class="rail blank"></i><i class="rail blank"></i><i class="rail blank"></i><i class="rail blank"></i><i class="fold mid"></i><svg viewBox="0 0 24 28"><use href="#mcs"/></svg><span class="label">MCS_橙</span></div></td><td></td><td></td><td></td><td></td></tr>
                        <tr><td><div class="node"><i class="rail blank"></i><i class="rail blank"></i><i class="rail blank"></i><i class="rail blank"></i><i class="rail"></i><i class="elbow"></i><i class="warn">!</i><svg viewBox="0 0 26 28"><use href="#mill-op"/></svg><span class="label">黄色铣</span></div></td><td><svg class="mark" role="img" aria-label="已生成"><use href="#done"/></svg></td><td><svg class="mark" role="img" aria-label="无"><use href="#none"/></svg></td><td></td><td>D</td></tr>
                        <tr><td><div class="node"><i class="rail blank"></i><i class="rail blank"></i><i class="rail blank"></i><i class="rail blank"></i><i class="fold mid"></i><svg viewBox="0 0 24 28"><use href="#mcs"/></svg><span class="label">MCS_蓝</span></div></td><td></td><td></td><td></td><td></td></tr>
                        <tr><td><div class="node"><i class="rail blank"></i><i class="rail blank"></i><i class="rail blank"></i><i class="rail blank"></i><i class="rail"></i><i class="elbow"></i><i class="warn">!</i><svg viewBox="0 0 26 28"><use href="#mill-op"/></svg><span class="label">蓝色铣</span></div></td><td><svg class="mark" role="img" aria-label="已生成"><use href="#done"/></svg></td><td><svg class="mark" role="img" aria-label="无"><use href="#none"/></svg></td><td></td><td>D</td></tr>
                        <tr><td><div class="node"><i class="rail blank"></i><i class="rail blank"></i><i class="rail blank"></i><i class="rail blank"></i><i class="fold last"></i><svg viewBox="0 0 24 28"><use href="#mcs"/></svg><span class="label">MCS_红</span></div></td><td></td><td></td><td></td><td></td></tr>
                        <tr><td><div class="node"><i class="rail blank"></i><i class="rail blank"></i><i class="rail blank"></i><i class="rail blank"></i><i class="rail blank"></i><i class="elbow"></i><i class="warn">!</i><svg viewBox="0 0 26 28"><path d="M1 12h6v15H1zM19 12h6v15h-6z" fill="#fbe0c8"/><path d="M0 12h7v15M26 12h-7v15" fill="none" stroke="#e58a2b" stroke-width="2"/><rect x="8" y="1" width="11" height="18" rx="3" fill="url(#grey-flute)" stroke="#222"/></svg><span class="label">红色钻</span></div></td><td><svg class="mark" role="img" aria-label="已生成"><use href="#done"/></svg></td><td><svg class="mark" role="img" aria-label="无"><use href="#none"/></svg></td><td></td><td>Z</td></tr>
                    </tbody>
                </table>
            </div>
            <div class="scroll-track"><i class="scroll-thumb"></i></div>
        </aside>

        <section class="graphics">
            <div class="part-tabs">
                <div class="part-tab">
                    <svg viewBox="0 0 26 26"><path d="M8 1H1v6h7v6H1v7h7" fill="none" stroke="#fff" stroke-width="2"/><path d="M13 17q1-7 7-7l3 2M25 8v6h-6M25 17q-1 6-7 6l-3-1M13 25v-6h6" fill="none" stroke="#fff" stroke-width="2"/></svg>
                    <span>_model1.prt</span>
                    <svg class="state" viewBox="0 0 18 18"><path d="M9 1H1v15h11v-4M9 1l3 3v2M6 12l9-9 2 3-8 7z" fill="none" stroke="#fff" stroke-width="2"/></svg>
                    <button aria-label="关闭"><svg class="state" viewBox="0 0 18 18"><path d="M3 3l11 11M14 3L3 14" stroke="#fff" stroke-width="3"/></svg></button>
                </div>
            </div>
            <svg class="scene" viewBox="835 421 3005 1698" preserveAspectRatio="xMidYMid slice">
                <!-- part body -->
                <path d="M1617 1119L1621 1115L1614 1468L1598 2130H1592z" fill="#5c5c5e"/>
                <path d="M1614 1468L2498 1489L2482 2130H1598z" fill="#b0b0b0"/>
                <path d="M1933 883L2190 888L2503 1217L2498 1489L1614 1468L1621 1116z" fill="#00ab90"/>
                <path d="M1933 883L2190 888M1614 1468L2498 1489" fill="none" stroke="#0b4a42" stroke-width="2"/>
                <path d="M1621 1116L1614 1468L1598 2130" fill="none" stroke="#333638" stroke-width="2"/>
                <!-- pocket -->
                <path d="M1914 1056V1036Q1918 972 1974 963L2160 965Q2226 974 2234 1039L2232 1080Q2226 1004 2153 998L1997 994Q1922 996 1914 1056z" fill="#004a3e"/>
                <path d="M1914 1036L1910 1203Q1916 1266 1986 1273L2160 1278Q2224 1266 2230 1203L2234 1039" fill="none" stroke="#0b5a50" stroke-width="2"/>
                <!-- MCS axes -->
                <path d="M2074 964L1945 961" stroke="#4b9a12" stroke-width="4"/>
                <path d="M1914 960L1945 955V966z" fill="#3f9417"/>
                <path d="M2076 925L2078 836" stroke="#d8432f" stroke-width="4"/>
                <path d="M2079 806L2084 837H2073z" fill="#f2604c"/>
                <path d="M2075 963L2076 931" stroke="#0a1fa0" stroke-width="4"/>
                <path d="M2076 920L2082 932Q2077 943 2071 932z" fill="#0a1fa0"/>
                <text class="axis" x="2042" y="804" fill="#e04a36">XM</text>
                <text class="axis" x="2047" y="924" fill="#0050ff">ZM</text>
                <text class="axis" x="1912" y="953" fill="#3d8c10">YM</text>
                <!-- cursor -->
                <g fill="none" stroke="#fff" stroke-width="2">
                    <path d="M2022 842V889M1999 866H2045"/>
                    <circle cx="2022" cy="866" r="16" stroke-dasharray="17 8" stroke-dashoffset="-4"/>
                </g>
                <!-- view triad -->
                <path d="M967 1944H918" stroke="#2f8a33" stroke-width="9"/>
                <path d="M886 1944L918 1937V1953z" fill="#3f9e42"/>
                <path d="M1002 1915L1003 1863" stroke="#0a4bff" stroke-width="7"/>
                <path d="M1003 1835L1010 1864H995z" fill="#0a4bff"/>
                <path d="M968 1913L1034 1915L1033 1982L967 1980z" fill="none" stroke="#d5d5d5" stroke-width="2"/>
                <text class="axis" x="997" y="1827" fill="#1c4fd0">Z</text>
                <text class="axis" x="865" y="1952" fill="#2f8a33">Y</text>
            </svg>
        </section>
    </main>

    <footer class="status-bar">总计 1</footer>

    <script>
        // Pad the tree with empty striped rows below the last operation
        const rows = document.getElementById('tree-rows');
        for (let i = 0; i < 24; i++) {
            const row = rows.insertRow();
            for (let c = 0; c < 5; c++) {
                row.insertCell();
            }
        }
    </script>
</body>
</html>
```
FILE: styles.css
```css
* {
    box-sizing: border-box;
}
body {
    margin: 0;
    height: 100vh;
    display: flex;
    flex-direction: column;
    overflow: hidden;
    background: #fff;
    color: #222;
    font-family: "Noto Sans", "Noto Sans CJK SC", sans-serif;
    font-size: 28px;
}
button {
    border: none;
    background: none;
    padding: 0;
    margin: 0;
    font: inherit;
    color: inherit;
}
h1, h2 {
    margin: 0;
    font-weight: normal;
}
i {
    font-style: normal;
}
svg {
    display: block;
    flex: none;
}
.sprite {
    position: absolute;
}
.caret {
    flex: none;
    display: block;
    width: 10px;
    height: 6px;
    background: #111;
    clip-path: polygon(0 0, 100% 0, 50% 100%);
}
.caret.light {
    background: #fff;
}

/* Header */
.app-header {
    flex: none;
    background: linear-gradient(90deg, #005f8d, #006999 55%, #0074a9);
    color: #fff;
    overflow: hidden;
}
.title-bar {
    display: flex;
    align-items: center;
    height: 54px;
}
.quick-access {
    display: flex;
    align-items: center;
    gap: 10px;
}
.logo-cut {
    width: 4px;
    height: 30px;
}
.quick-access .divider {
    width: 1px;
    height: 42px;
    background: #004f78;
}
.quick {
    display: flex;
    align-items: center;
    justify-content: center;
    min-width: 26px;
    height: 40px;
}
.quick svg {
    width: 26px;
    height: 26px;
}
.quick.narrow {
    min-width: 12px;
}
.quick .more-mark {
    width: 14px;
    height: 14px;
}
.quick.dim {
    opacity: 0.5;
}
.window-menu {
    gap: 7px;
    margin-right: 6px;
}
.app-title {
    flex: 1;
    text-align: center;
    font-size: 30px;
    line-height: 54px;
}
.window-side {
    display: flex;
    align-items: center;
    gap: 40px;
    padding-top: 8px;
}
.brand {
    font-size: 28px;
    font-weight: 800;
}
.minimize {
    width: 14px;
    height: 4px;
    margin-top: 14px;
    background: #fff;
}
.quick.maximize {
    width: 14px;
    min-width: 14px;
    height: 14px;
    margin: 0 -10px 0 -20px;
    border: 2px solid #fff;
}
.tab-row {
    display: flex;
    align-items: center;
    height: 64px;
}
.tabs {
    flex: 1;
    display: flex;
    align-self: flex-end;
    margin: 0 0 3px -61px;
    font-size: 34px;
}
.tabs a {
    padding: 5px 25px 0;
    border-bottom: 3px solid transparent;
    line-height: 50px;
    color: #fff;
    text-decoration: none;
}
.tabs a.file {
    padding-right: 42px;
}
.tabs a.active {
    color: #f3d35c;
    border-color: #d9cf83;
}
.search {
    display: flex;
    align-items: center;
    width: 452px;
    height: 46px;
    margin-right: 16px;
    padding-right: 4px;
    border: 1px solid #6b7f8c;
    background: #fff;
}
.search input {
    flex: 1;
    min-width: 0;
    border: none;
    padding: 0 0 0 1px;
    background: none;
    font: inherit;
}
.search input::placeholder {
    color: #a9a9a9;
}
.search svg {
    width: 38px;
    height: 38px;
}
.tab-row .last {
    margin: 0 11px 0 14px;
}

/* Ribbon */
.ribbon {
    flex: none;
    display: flex;
    padding: 8px 0 5px;
    margin-left: -65px;
    border-bottom: 1px solid #dcdcdc;
}
.group {
    flex: none;
    display: flex;
    flex-direction: column;
    padding: 0 14px;
    border-right: 1px solid #d6d6d6;
}
.group.compact {
    padding: 0 11px;
}
.group.tight {
    padding-right: 10px;
}
.group:last-child {
    border: none;
}
.group-body {
    display: flex;
    gap: 4px;
    height: 145px;
}
.group.tight .group-body {
    gap: 2px;
}
.tool {
    display: flex;
    flex-direction: column;
    align-items: center;
    height: 140px;
    padding: 4px 5px 0;
    line-height: 38px;
    white-space: nowrap;
}
.tool svg {
    width: 50px;
    height: 50px;
    margin-bottom: 8px;
}
.tool .caret {
    margin-top: 7px;
}
.tool.more {
    padding: 0 0 0 20px;
}
.tool.more svg {
    margin-bottom: 6px;
}
.tool.wide {
    padding-right: 10px;
}
.on {
    background: #cde4ec;
}
.tool:disabled {
    color: #c9c9c9;
}
.tool:disabled svg {
    opacity: 0.5;
}
.group-name {
    display: flex;
    align-items: center;
    height: 32px;
    margin-top: 3px;
    line-height: 32px;
    color: #14618a;
    white-space: nowrap;
}
.group-name span {
    flex: 1;
    margin-right: 38px;
    text-align: center;
}
.group-name .caret {
    margin: 6px 0 0 -10px;
}
.group.compact .group-name {
    margin: 3px -4px 0 -8px;
}
.group.compact .group-name span {
    margin-right: 28px;
}
.stack {
    display: flex;
    flex-direction: column;
    gap: 28px;
    padding: 16px 0 0 8px;
}
.mini {
    width: 38px;
    height: 38px;
}
.mini svg {
    width: 38px;
    height: 38px;
}
.stack.icons {
    gap: 17px;
    padding-top: 11px;
}
.stack.icons span {
    display: flex;
    align-items: center;
    gap: 9px;
}
.stack.icons .mini {
    width: 48px;
    height: 49px;
    padding-left: 5px;
}
.stack.levels {
    gap: 22px;
    padding: 7px 4px 0 28px;
}
.stack.levels svg {
    width: 26px;
    height: 26px;
}
.player {
    display: grid;
    grid-template-columns: 38px 39px 38px 35px;
    grid-template-rows: 38px 38px;
    row-gap: 28px;
    align-items: center;
    padding: 16px 0 0 6px;
}
.player .caret {
    margin-left: 12px;
}
.speed {
    display: flex;
    flex-direction: column;
    align-items: center;
    padding-top: 16px;
    line-height: 50px;
}
.speed input {
    appearance: none;
    width: 150px;
    height: 26px;
    margin: 0;
    background: linear-gradient(#adadad, #adadad) center / 100% 7px no-repeat;
}
.speed input::-webkit-slider-thumb {
    appearance: none;
    width: 12px;
    height: 25px;
    background: #005f8d;
}
.mini-rows {
    display: flex;
    flex-direction: column;
    gap: 24px;
    padding-top: 15px;
}
.mini-rows div {
    display: flex;
    gap: 9px;
}
.mini-rows .divider {
    width: 1px;
    background: #d6d6d6;
}
.tiny, .tiny svg {
    width: 26px;
    height: 26px;
}

/* Selection bar */
.selection-bar {
    flex: none;
    display: flex;
    align-items: center;
    gap: 10px;
    height: 56px;
    margin-left: -24px;
    border-bottom: 2px solid #b5b5b5;
}
.menu-button {
    display: flex;
    align-items: center;
    gap: 8px;
}
.selection-bar .divider {
    width: 1px;
    height: 42px;
    margin: 0 8px 0 4px;
    background: #d6d6d6;
}
.combo {
    position: relative;
    width: 348px;
}
.combo + .pick + .combo {
    width: 367px;
}
.combo::after {
    content: "";
    position: absolute;
    right: 8px;
    top: 20px;
    width: 10px;
    height: 7px;
    background: #a6a6a6;
    clip-path: polygon(0 0, 100% 0, 50% 100%);
}
.combo select {
    appearance: none;
    display: block;
    width: 100%;
    height: 46px;
    padding: 0 4px;
    border: 2px solid #c6c6c6;
    border-radius: 0;
    background: #f5f5f5;
    font: inherit;
    color: #a9a9a9;
    opacity: 1;
}
.pick {
    min-width: 28px;
    display: flex;
    justify-content: center;
}
.combo + .pick {
    min-width: 32px;
}
.pick svg {
    width: 26px;
    height: 26px;
}
.pick.gap {
    margin-left: 6px;
}
.pick.on svg {
    width: 34px;
    height: 34px;
}
.pick text {
    font-weight: bold;
}

/* Operation navigator */
.workspace {
    flex: 1;
    min-height: 0;
    display: flex;
}
.navigator {
    flex: none;
    width: 834px;
    display: flex;
    flex-direction: column;
    padding: 0 22px 9px 0;
    border-right: 1px solid #a5a5a5;
    overflow: hidden;
}
.navigator h2 {
    margin-left: -16px;
    font-size: 30px;
}
.navigator-title {
    display: flex;
    align-items: center;
    justify-content: space-between;
    height: 58px;
    padding-right: 6px;
}
.dock {
    width: 26px;
    height: 26px;
    border: 2px solid #222;
    border-top-width: 5px;
}
.navigator-tools {
    display: flex;
    gap: 3px;
    height: 57px;
    padding-top: 1px;
    margin-left: -13px;
}
.nav-view {
    width: 50px;
    height: 50px;
    padding: 0 6px;
}
.nav-view svg {
    width: 38px;
    height: 38px;
}
.nav-view.boxed {
    margin-left: 3px;
    border: 2px solid #c4c4c4;
    padding: 0 4px;
}
.tree-area {
    flex: 1;
    min-height: 0;
    overflow: hidden;
    border-top: 2px solid #dcdcdc;
    border-right: 1px solid #dcdcdc;
}
.tree {
    width: 100%;
    table-layout: fixed;
    border-collapse: separate;
    border-spacing: 0;
    font-size: 30px;
}
.col-name {
    width: 396px;
}
.col-path, .col-ipw {
    width: 78px;
}
.col-channel {
    width: 233px;
}
.tree th {
    height: 44px;
    padding: 0 0 0 10px;
    border-right: 1px solid #cfcfcf;
    border-bottom: 1px solid #cfcfcf;
    background: #efefef;
    font-weight: normal;
    text-align: left;
    line-height: 40px;
    overflow: hidden;
    white-space: nowrap;
}
.tree th:first-child {
    padding-left: 0;
}
.tree td {
    height: 44px;
    padding: 0 0 0 8px;
    border-right: 1px solid #ececec;
    border-bottom: 2px solid #ececec;
    line-height: 40px;
    overflow: hidden;
}
.tree tbody tr:nth-child(odd) td {
    height: 43px;
}
.tree tbody tr:nth-child(even) td {
    background: #fafafa;
}
.tree td:first-child {
    padding: 0;
    border-right: 2px solid #222;
}
.tree th:last-child, .tree td:last-child {
    border-right: none;
}
.tree .selected td:not(:first-child) {
    background: #cde4ec !important;
}
.mark {
    width: 24px;
    height: 24px;
}
.node {
    display: flex;
    align-items: center;
    height: 41px;
    margin-left: -6px;
}
.node svg {
    width: 24px;
    height: 28px;
    margin: 0 3px 0 -2px;
}
.label {
    flex: 1;
}
/* 30px per level, guide line 9px in */
.rail, .fold, .elbow {
    flex: none;
    align-self: stretch;
    width: 30px;
    background: repeating-linear-gradient(#999 0 2px, transparent 2px 4px) 9px 0 / 1px 100% no-repeat;
}
.rail.blank {
    background: none;
}
.fold, .elbow {
    display: flex;
    align-items: center;
    background-size: 1px 50%;
}
.fold:not(.last):not(.mid) {
    background: none;
}
.fold.mid, .elbow.full {
    background-size: 1px 100%;
}
.fold::before {
    content: "";
    width: 19px;
    height: 20px;
    border: 1px solid #ccc;
    background: linear-gradient(#222, #222) center / 13px 2px no-repeat #fff;
}
.elbow::before {
    content: "";
    width: 14px;
    margin-left: 9px;
    border-bottom: 1px dotted #999;
}
.warn {
    width: 23px;
    padding-left: 2px;
    color: #e5a64b;
}
.selected .label {
    background: #cde4ec;
}
.node text {
    font-weight: bold;
}
.scroll-track {
    flex: none;
    height: 28px;
    padding: 10px 17px;
    margin-bottom: 4px;
    border-bottom: 2px solid #dcdcdc;
    background: #f0f0f0;
}
.scroll-thumb {
    display: block;
    width: 65px;
    height: 4px;
    background: #8a8a8a;
}

/* Graphics window */
.graphics {
    flex: 1;
    min-width: 0;
    display: flex;
    flex-direction: column;
}
.part-tabs {
    display: flex;
    border-bottom: 2px solid #0d5a70;
}
.part-tab {
    display: flex;
    align-items: center;
    gap: 7px;
    height: 51px;
    padding: 0 8px;
    background: #00598a;
    color: #fff;
    font-size: 30px;
}
.part-tab svg {
    width: 26px;
    height: 26px;
}
.part-tab .state {
    width: 18px;
    height: 18px;
}
.scene {
    flex: 1;
    min-height: 0;
    width: 100%;
    background: #242529;
}
.axis {
    font-family: "Liberation Sans", sans-serif;
    font-size: 20px;
}

.status-bar {
    flex: none;
    height: 39px;
    padding-left: 10px;
    border-top: 2px solid #b5b5b5;
    line-height: 40px;
    text-align: center;
    font-weight: bold;
}
```
